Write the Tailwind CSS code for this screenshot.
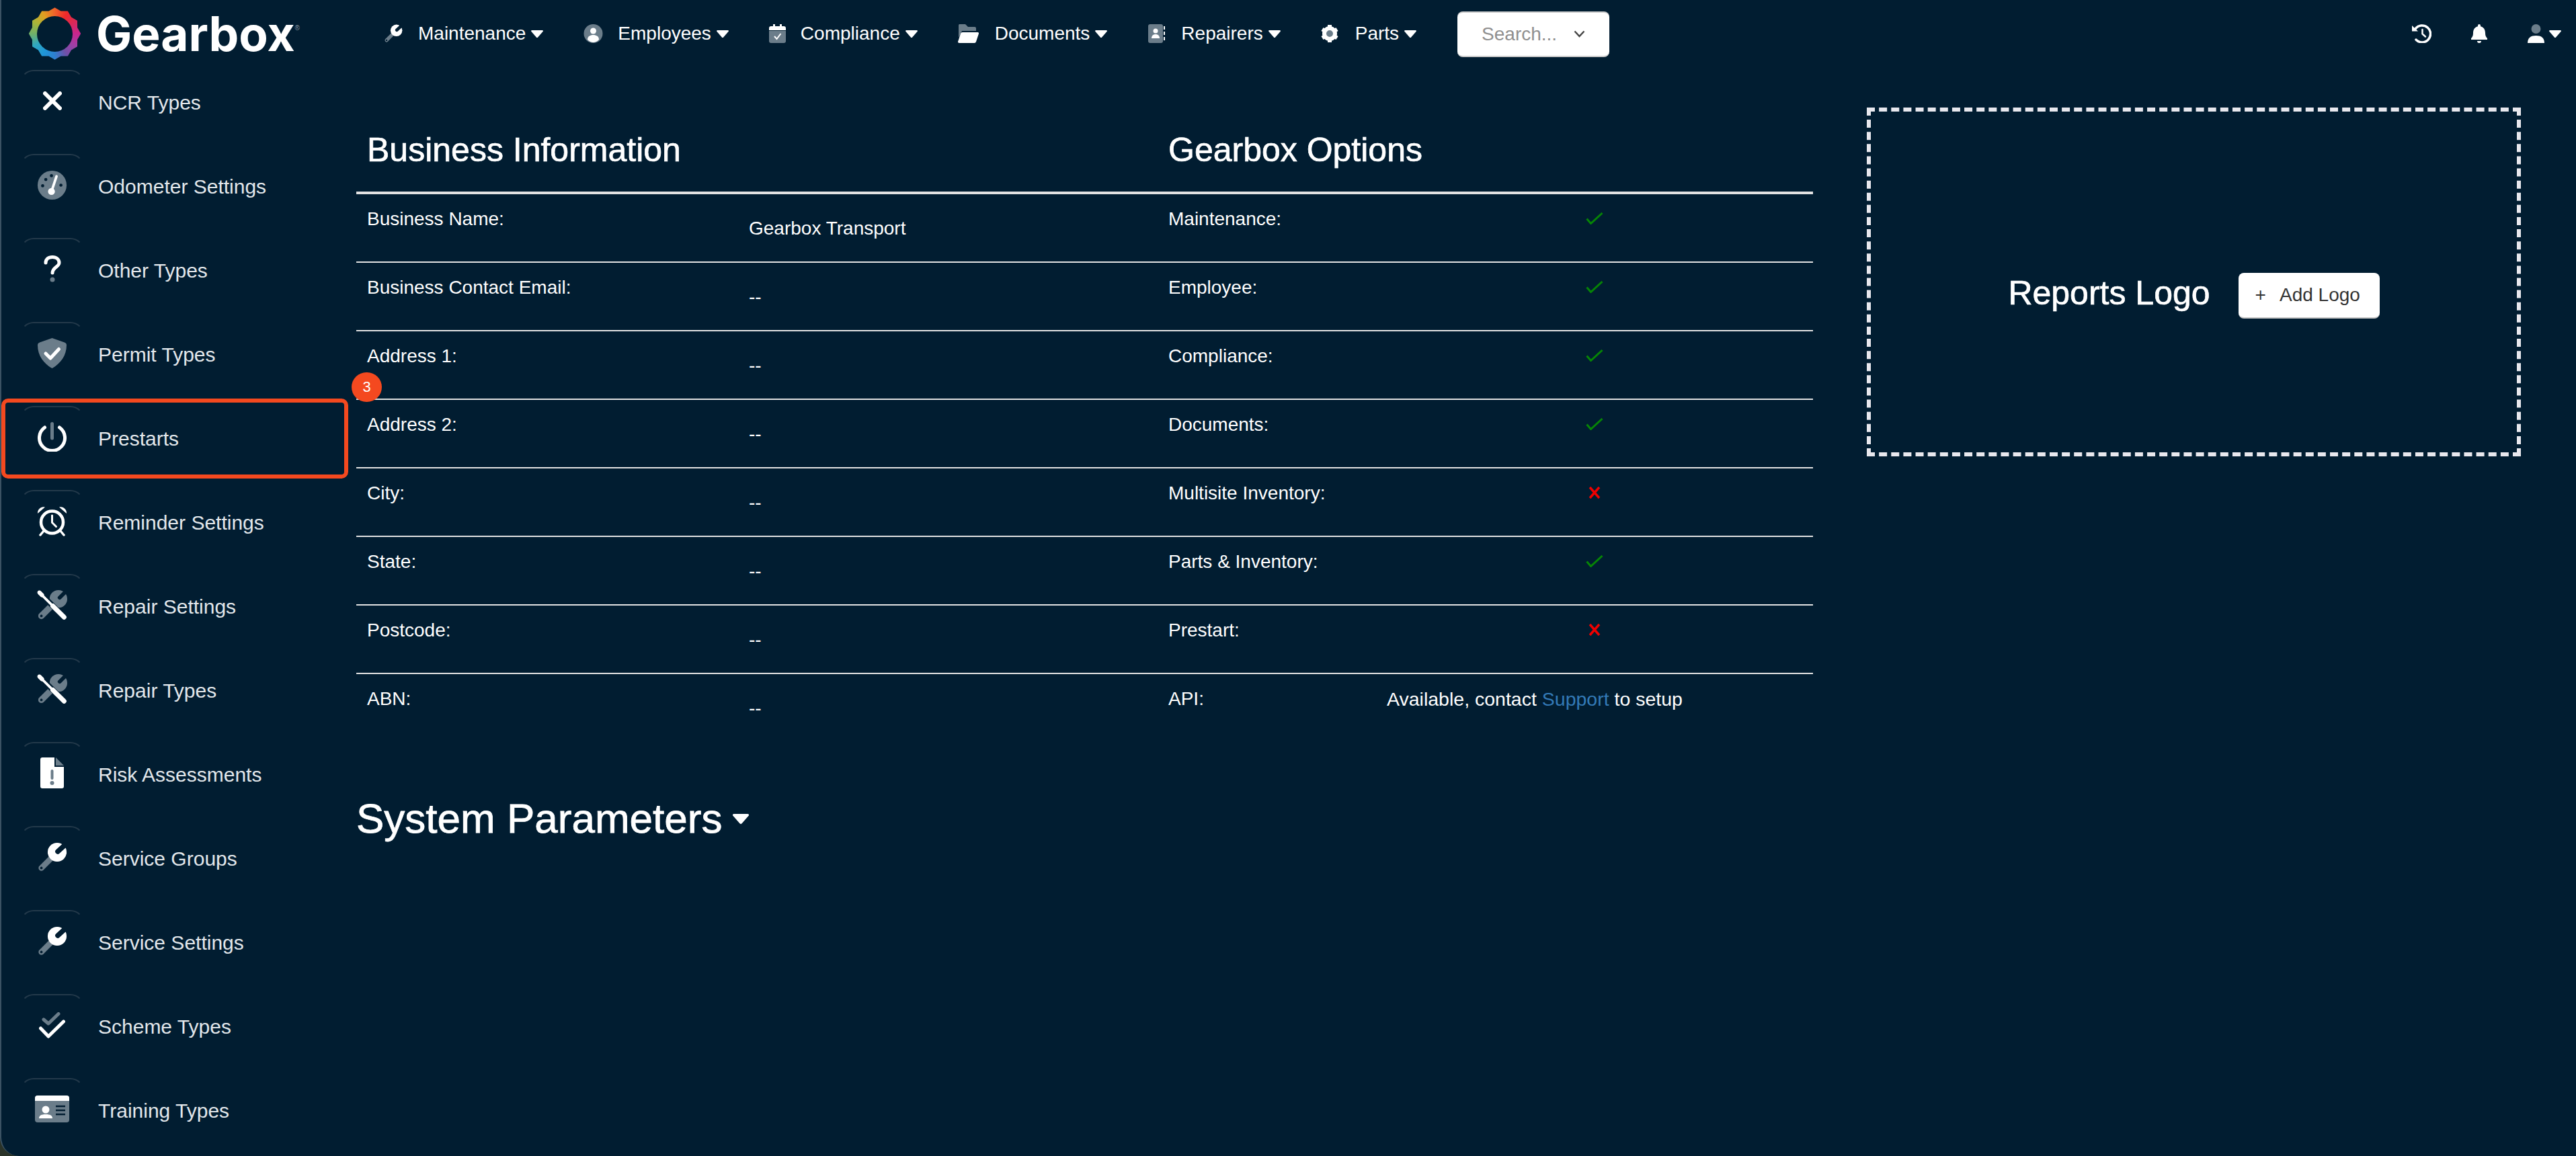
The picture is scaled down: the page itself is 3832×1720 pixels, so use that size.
<!DOCTYPE html>
<html lang="en">
<head>
  <meta charset="UTF-8">
  <title>Gearbox - Business Settings</title>
  <script src="https://cdn.jsdelivr.net/npm/@tailwindcss/browser@4"></script>
</head>
<body class="bg-[#2a3328] font-['Liberation_Sans',Arial,sans-serif]">
  <!-- shared icons -->
  <svg class="hidden">
    <symbol id="caret" viewBox="0 0 18 11"><path d="M1.5 0h15c1.300 0 1.800 1.200 1 2.100l-7.400 8.300c-.6.700-1.600.7-2.200 0L.5 2.100C-.3 1.200.2 0 1.500 0z" fill="#fff"/></symbol>
    <symbol id="check" viewBox="0 0 26 18"><path d="M1.500 9.500L7.500 16.500L24.500 1" fill="none" stroke="#068406" stroke-width="3"/></symbol>
    <symbol id="cross" viewBox="0 0 18 18"><path d="M2 1L16 17M16 1L2 17" fill="none" stroke="#f00000" stroke-width="3.500"/></symbol>
    <symbol id="wrench" viewBox="0 0 48 48">
      <path d="M7 41L24 24" stroke="#6b7d8a" stroke-width="9" stroke-linecap="round"/>
      <circle cx="7" cy="41" r="2" fill="#011d31"/>
      <circle cx="32" cy="16" r="15" fill="#fff"/>
      <path d="M33 15L46 3" stroke="#011d31" stroke-width="8" stroke-linecap="round"/>
    </symbol>
    <symbol id="tools" viewBox="0 0 48 48">
      <path d="M7 41L24 24" stroke="#6b7d8a" stroke-width="10" stroke-linecap="round"/>
      <circle cx="7" cy="41" r="2" fill="#011d31"/>
      <circle cx="34" cy="14" r="14" fill="#6b7d8a"/>
      <path d="M36 12L47 1" stroke="#011d31" stroke-width="6" stroke-linecap="round"/>
      <path d="M5 5L43 43" stroke="#011d31" stroke-width="9" stroke-linecap="round"/>
      <path d="M3 3L22 22" stroke="#fff" stroke-width="4" stroke-linecap="round"/>
      <path d="M4 4L8 8" stroke="#fff" stroke-width="6.500" stroke-linecap="round"/>
      <path d="M25 25L43 43" stroke="#fff" stroke-width="7.500" stroke-linecap="round"/>
    </symbol>
  </svg>

  <div class="w-[3832px] h-[1720px] overflow-hidden bg-[#011d31] border-l-2 border-[#3b5263] rounded-bl-[28px] text-white">
    <header class="h-[100px] mb-[4px] flex items-center">
      <div class="w-[568px] pl-[40px] flex items-center shrink-0">
        <div class="relative w-[79px] h-[79px] bg-[conic-gradient(#f0622a,#ee2a2a_30deg,#d8285a_60deg,#c9268f_90deg,#a03fa5_120deg,#6f50a8_150deg,#2d7fd0_180deg,#1f96d8_210deg,#2fa8c0_240deg,#6fb06a_270deg,#a8b53a_300deg,#e0a020_330deg,#f0622a)] [clip-path:polygon(50%_1%,61.4%_7.5%,74.5%_7.6%,81.1%_18.9%,92.4%_25.5%,92.500%_38.6%,99%_50%,92.500%_61.4%,92.4%_74.5%,81.1%_81.1%,74.5%_92.4%,61.4%_92.500%,50%_99%,38.6%_92.500%,25.5%_92.4%,18.9%_81.1%,7.6%_74.5%,7.500%_61.4%,1%_50%,7.500%_38.6%,7.6%_25.5%,18.9%_18.9%,25.5%_7.6%,38.6%_7.500%)]">
          <div class="absolute inset-[13px] rounded-full bg-[#011d31]"></div>
        </div>
        <span class="ml-[22px] font-['Inter',sans-serif] font-bold text-[71px] leading-[80px] tracking-[0px] text-white">Gearbox</span>
        <span class="self-start mt-[26px] text-[10px] leading-[12px] text-[#8a97a1]">®</span>
      </div>

      <nav class="flex items-center gap-[60px] text-[28px] leading-[36px] text-white">
        <a class="flex items-center">
          <svg class="w-[30px] h-[28px] mr-[22px]"><use href="#wrench"/></svg>
          <span>Maintenance</span>
          <svg class="w-[18px] h-[11px] ml-[8px]"><use href="#caret"/></svg>
        </a>
        <a class="flex items-center">
          <svg class="w-[29px] h-[28px] mr-[22px]" viewBox="0 0 29 28">
            <circle cx="14.500" cy="14" r="14" fill="#6b7d8a"/>
            <circle cx="14.500" cy="10" r="4.500" fill="#fff"/>
            <path d="M6 23c0-5 4-7 8.500-7s8.500 2 8.500 7c-2.500 2.500-5.500 4-8.500 4s-6-1.500-8.500-4z" fill="#fff"/>
          </svg>
          <span>Employees</span>
          <svg class="w-[18px] h-[11px] ml-[8px]"><use href="#caret"/></svg>
        </a>
        <a class="flex items-center">
          <svg class="w-[25px] h-[28px] mr-[22px]" viewBox="0 0 25 28">
            <path d="M0 10h25v15a3 3 0 0 1-3 3H3a3 3 0 0 1-3-3z" fill="#6b7d8a"/>
            <path d="M3 3h3V0h3v3h7V0h3v3h3a3 3 0 0 1 3 3v3H0V6a3 3 0 0 1 3-3z" fill="#fff"/>
            <path d="M8 18l3.500 4L17.500 14" fill="none" stroke="#fff" stroke-width="2"/>
          </svg>
          <span>Compliance</span>
          <svg class="w-[18px] h-[11px] ml-[8px]"><use href="#caret"/></svg>
        </a>
        <a class="flex items-center">
          <svg class="w-[31px] h-[28px] mr-[24px]" viewBox="0 0 31 28">
            <path d="M2 0h9l4 4h10a2 2 0 0 1 2 2v4H6L1 20V2a2 2 0 0 1 1-2z" fill="#6b7d8a"/>
            <path d="M7 12h22c1.500 0 2.300 1 2 2l-4 12c-.4 1.300-1.200 2-2.500 2H2c-1.500 0-2.300-1-2-2l4-12c.4-1.300 1.500-2 3-2z" fill="#fff"/>
          </svg>
          <span>Documents</span>
          <svg class="w-[18px] h-[11px] ml-[8px]"><use href="#caret"/></svg>
        </a>
        <a class="flex items-center">
          <svg class="w-[25px] h-[28px] mr-[24px] ml-[1px]" viewBox="0 0 25 28">
            <rect width="22" height="28" rx="3" fill="#6b7d8a"/>
            <circle cx="11" cy="10" r="3.500" fill="#fff"/>
            <path d="M5 21c0-4 2.500-6 6-6s6 2 6 6z" fill="#fff"/>
            <path d="M24 3v5M24 11v5M24 19v5" stroke="#fff" stroke-width="2"/>
          </svg>
          <span>Repairers</span>
          <svg class="w-[18px] h-[11px] ml-[8px]"><use href="#caret"/></svg>
        </a>
        <a class="flex items-center">
          <svg class="w-[26px] h-[28px] mr-[25px]" viewBox="0 0 26 28">
            <path d="M13 1v5M13 22v5M2 7.500l4 2.500M24 7.500l-4 2.500M2 20.500l4-2.500M24 20.500l-4-2.500" stroke="#fff" stroke-width="6"/>
            <circle cx="13" cy="14" r="8" fill="#6b7d8a" stroke="#fff" stroke-width="6"/>
          </svg>
          <span>Parts</span>
          <svg class="w-[18px] h-[11px] ml-[8px]"><use href="#caret"/></svg>
        </a>
        <div class="w-[226px] h-[68px] mt-[1px] ml-[1px] pl-[36px] pr-[36px] flex items-center justify-between bg-white rounded-[8px] border-y-2 border-[#cccccc] text-[#8f8f8f]">
          <span>Search...</span>
          <svg class="w-[17px] h-[11px]" viewBox="0 0 17 11"><path d="M1.500 1.500L8.500 9L15.500 1.500" fill="none" stroke="#444" stroke-width="2.500"/></svg>
        </div>
      </nav>

      <div class="ml-auto pr-[22px] flex items-center">
        <svg class="w-[29px] h-[28px]" viewBox="0 0 29 28">
          <path d="M5 7A12.500 12.500 0 1 1 6 23" fill="none" stroke="#fff" stroke-width="3.500" stroke-linecap="round"/>
          <path d="M0 2L9 10.500H0z" fill="#fff"/>
          <path d="M15.500 8v6.500l4.500 4" fill="none" stroke="#fff" stroke-width="2.500" stroke-linecap="round"/>
        </svg>
        <svg class="w-[24px] h-[28px] ml-[59px]" viewBox="0 0 24 28">
          <path d="M12 0a2 2 0 0 1 2 2v1.200C18.500 4 21 8 21 13c0 4 1 6 3 8v2H0v-2c2-2 3-4 3-8C3 8 5.500 4 10 3.200V2a2 2 0 0 1 2-2z" fill="#fff"/>
          <path d="M9 25h6a3 3 0 0 1-6 0z" fill="#fff"/>
        </svg>
        <svg class="w-[25px] h-[28px] ml-[60px]" viewBox="0 0 25 28">
          <circle cx="12.500" cy="7" r="7" fill="#6b7d8a"/>
          <path d="M0 28c0-8 5-11 12.500-11S25 20 25 28z" fill="#fff"/>
        </svg>
        <svg class="w-[18px] h-[11px] ml-[7px]"><use href="#caret"/></svg>
      </div>
    </header>

    <div class="flex">
      <aside class="w-[518px] shrink-0 text-[30px] leading-[36px] text-[#e2e7eb]">
        <div class="h-[125px] pl-[28px] flex items-start">
          <div class="w-[95px] h-[92px] flex items-center justify-center rounded-[20px] border-2 border-transparent border-t-[#23394a]">
            <svg class="w-[28px] h-[28px]" viewBox="0 0 28 28"><path d="M3 3L25 25M25 3L3 25" stroke="#fff" stroke-width="6" stroke-linecap="round"/></svg>
          </div>
          <span class="ml-[21px] h-[98px] flex items-center">NCR Types</span>
        </div>
        <div class="h-[125px] pl-[28px] flex items-start">
          <div class="w-[95px] h-[92px] flex items-center justify-center rounded-[20px] border-2 border-transparent border-t-[#23394a]">
            <svg class="w-[45px] h-[45px]" viewBox="0 0 48 48">
              <circle cx="24" cy="24" r="23" fill="#6b7d8a"/>
              <circle cx="14" cy="15" r="2.500" fill="#011d31"/><circle cx="23" cy="9" r="2.500" fill="#011d31"/><circle cx="9" cy="25" r="2.500" fill="#011d31"/><circle cx="38" cy="24" r="2.500" fill="#011d31"/>
              <path d="M31 10L24 31" stroke="#fff" stroke-width="4" stroke-linecap="round"/>
              <circle cx="23" cy="34" r="5.500" fill="#fff"/>
            </svg>
          </div>
          <span class="ml-[21px] h-[98px] flex items-center">Odometer Settings</span>
        </div>
        <div class="h-[125px] pl-[28px] flex items-start">
          <div class="w-[95px] h-[92px] flex items-center justify-center rounded-[20px] border-2 border-transparent border-t-[#23394a]">
            <svg class="w-[26px] h-[40px]" viewBox="0 0 26 40">
              <path d="M3 11C3 5.500 7 2.500 13 2.500S23 6 23 11C23 17 13 18 13 26" fill="none" stroke="#fff" stroke-width="5" stroke-linecap="round"/>
              <circle cx="13" cy="36" r="3.500" fill="#6b7d8a"/>
            </svg>
          </div>
          <span class="ml-[21px] h-[98px] flex items-center">Other Types</span>
        </div>
        <div class="h-[125px] pl-[28px] flex items-start">
          <div class="w-[95px] h-[92px] flex items-center justify-center rounded-[20px] border-2 border-transparent border-t-[#23394a]">
            <svg class="w-[43px] h-[45px]" viewBox="0 0 43 45">
              <path d="M21.500 0L40 6.500c2 .7 3 2 3 4C43 26 34 38 21.500 45C9 38 0 26 0 10.500c0-2 1-3.300 3-4z" fill="#6b7d8a"/>
              <path d="M12 23l7 7L31.500 16.500" fill="none" stroke="#fff" stroke-width="5" stroke-linecap="round" stroke-linejoin="round"/>
            </svg>
          </div>
          <span class="ml-[21px] h-[98px] flex items-center">Permit Types</span>
        </div>
        <div class="relative h-[125px] pl-[28px] flex items-start">
          <div class="absolute top-[-11px] left-0 w-[516px] h-[119px] rounded-[10px] border-[6px] border-[#f4491f]"></div>
          <div class="absolute top-[-50px] left-[521px] z-10 w-[45px] h-[44px] rounded-full bg-[#f4491f] flex items-center justify-center text-[22px] leading-[24px] text-white">3</div>
          <div class="w-[95px] h-[92px] flex items-center justify-center rounded-[20px] border-2 border-transparent border-t-[#23394a]">
            <svg class="w-[43px] h-[44px]" viewBox="0 0 43 44">
              <path d="M10.500 8A19 19 0 1 0 32.500 8" fill="none" stroke="#fff" stroke-width="5" stroke-linecap="round"/>
              <path d="M21.500 2.500V24" stroke="#6b7d8a" stroke-width="5" stroke-linecap="round"/>
            </svg>
          </div>
          <span class="ml-[21px] h-[98px] flex items-center">Prestarts</span>
        </div>
        <div class="h-[125px] pl-[28px] flex items-start">
          <div class="w-[95px] h-[92px] flex items-center justify-center rounded-[20px] border-2 border-transparent border-t-[#23394a]">
            <svg class="w-[45px] h-[45px]" viewBox="0 0 45 45">
              <circle cx="22.500" cy="24" r="16.500" fill="none" stroke="#fff" stroke-width="4.500"/>
              <path d="M22.500 14v10.500l6 6" fill="none" stroke="#fff" stroke-width="3" stroke-linecap="round"/>
              <path d="M1 11A9 9 0 0 1 12 1.500z" fill="#fff"/>
              <path d="M44 11A9 9 0 0 0 33 1.500z" fill="#fff"/>
              <path d="M10 37l-5 6M35 37l5 6" stroke="#fff" stroke-width="3.500" stroke-linecap="round"/>
            </svg>
          </div>
          <span class="ml-[21px] h-[98px] flex items-center">Reminder Settings</span>
        </div>
        <div class="h-[125px] pl-[28px] flex items-start">
          <div class="w-[95px] h-[92px] flex items-center justify-center rounded-[20px] border-2 border-transparent border-t-[#23394a]">
            <svg class="w-[45px] h-[45px]"><use href="#tools"/></svg>
          </div>
          <span class="ml-[21px] h-[98px] flex items-center">Repair Settings</span>
        </div>
        <div class="h-[125px] pl-[28px] flex items-start">
          <div class="w-[95px] h-[92px] flex items-center justify-center rounded-[20px] border-2 border-transparent border-t-[#23394a]">
            <svg class="w-[45px] h-[45px]"><use href="#tools"/></svg>
          </div>
          <span class="ml-[21px] h-[98px] flex items-center">Repair Types</span>
        </div>
        <div class="h-[125px] pl-[28px] flex items-start">
          <div class="w-[95px] h-[92px] flex items-center justify-center rounded-[20px] border-2 border-transparent border-t-[#23394a]">
            <svg class="w-[35px] h-[46px]" viewBox="0 0 35 46">
              <path d="M3 0h18v14h14v29a3 3 0 0 1-3 3H3a3 3 0 0 1-3-3V3a3 3 0 0 1 3-3z" fill="#fff"/>
              <path d="M23 0l12 12H23z" fill="#6b7d8a"/>
              <rect x="15.500" y="18" width="4" height="15" rx="2" fill="#6b7d8a"/>
              <circle cx="17.500" cy="38" r="3" fill="#6b7d8a"/>
            </svg>
          </div>
          <span class="ml-[21px] h-[98px] flex items-center">Risk Assessments</span>
        </div>
        <div class="h-[125px] pl-[28px] flex items-start">
          <div class="w-[95px] h-[92px] flex items-center justify-center rounded-[20px] border-2 border-transparent border-t-[#23394a]">
            <svg class="w-[45px] h-[45px]"><use href="#wrench"/></svg>
          </div>
          <span class="ml-[21px] h-[98px] flex items-center">Service Groups</span>
        </div>
        <div class="h-[125px] pl-[28px] flex items-start">
          <div class="w-[95px] h-[92px] flex items-center justify-center rounded-[20px] border-2 border-transparent border-t-[#23394a]">
            <svg class="w-[45px] h-[45px]"><use href="#wrench"/></svg>
          </div>
          <span class="ml-[21px] h-[98px] flex items-center">Service Settings</span>
        </div>
        <div class="h-[125px] pl-[28px] flex items-start">
          <div class="w-[95px] h-[92px] flex items-center justify-center rounded-[20px] border-2 border-transparent border-t-[#23394a]">
            <svg class="w-[39px] h-[39px]" viewBox="0 0 39 39">
              <path d="M7 11l7 6L29 2.500" fill="none" stroke="#6b7d8a" stroke-width="5" stroke-linecap="round" stroke-linejoin="round"/>
              <path d="M2.500 24L14 36L36.500 14" fill="none" stroke="#fff" stroke-width="5" stroke-linecap="round" stroke-linejoin="round"/>
            </svg>
          </div>
          <span class="ml-[21px] h-[98px] flex items-center">Scheme Types</span>
        </div>
        <div class="h-[125px] pl-[28px] flex items-start">
          <div class="w-[95px] h-[92px] flex items-center justify-center rounded-[20px] border-2 border-transparent border-t-[#23394a]">
            <svg class="w-[51px] h-[40px]" viewBox="0 0 51 40">
              <rect width="51" height="40" rx="4" fill="#6b7d8a"/>
              <path d="M4 0h43a4 4 0 0 1 4 4v4H0V4a4 4 0 0 1 4-4z" fill="#fff"/>
              <circle cx="16" cy="21" r="5.500" fill="#fff"/>
              <path d="M6 34c0-4 3-6 10-6s10 2 10 6z" fill="#fff"/>
              <path d="M31 16h14M31 22h14M31 28h14" stroke="#011d31" stroke-width="2.500"/>
            </svg>
          </div>
          <span class="ml-[21px] h-[98px] flex items-center">Training Types</span>
        </div>
      </aside>

      <main class="pl-[10px] flex items-start">
        <div class="w-[2167px] shrink-0">
          <div class="grid grid-cols-[1192px_975px] text-[28px] leading-[36px] text-white">
            <section>
              <h2 class="h-[185px] pt-[90px] pl-[16px] border-b-4 border-[#e2e2e2] text-[50px] leading-[58px] [-webkit-text-stroke:0.7px_white]">Business Information</h2>
              <div class="h-[102px] flex border-b-2 border-[#e2e2e2]"><span class="w-[584px] pl-[16px] pt-[19px]">Business Name:</span><span class="pt-[33px]">Gearbox Transport</span></div>
              <div class="h-[102px] flex border-b-2 border-[#e2e2e2]"><span class="w-[584px] pl-[16px] pt-[19px]">Business Contact Email:</span><span class="pt-[33px]">--</span></div>
              <div class="h-[102px] flex border-b-2 border-[#e2e2e2]"><span class="w-[584px] pl-[16px] pt-[19px]">Address 1:</span><span class="pt-[33px]">--</span></div>
              <div class="h-[102px] flex border-b-2 border-[#e2e2e2]"><span class="w-[584px] pl-[16px] pt-[19px]">Address 2:</span><span class="pt-[33px]">--</span></div>
              <div class="h-[102px] flex border-b-2 border-[#e2e2e2]"><span class="w-[584px] pl-[16px] pt-[19px]">City:</span><span class="pt-[33px]">--</span></div>
              <div class="h-[102px] flex border-b-2 border-[#e2e2e2]"><span class="w-[584px] pl-[16px] pt-[19px]">State:</span><span class="pt-[33px]">--</span></div>
              <div class="h-[102px] flex border-b-2 border-[#e2e2e2]"><span class="w-[584px] pl-[16px] pt-[19px]">Postcode:</span><span class="pt-[33px]">--</span></div>
              <div class="h-[102px] flex"><span class="w-[584px] pl-[16px] pt-[19px]">ABN:</span><span class="pt-[33px]">--</span></div>
            </section>
            <section>
              <h2 class="h-[185px] pt-[90px] pl-[16px] border-b-4 border-[#e2e2e2] text-[50px] leading-[58px] [-webkit-text-stroke:0.7px_white]">Gearbox Options</h2>
              <div class="h-[102px] flex items-start border-b-2 border-[#e2e2e2]"><span class="w-[637px] pl-[16px] pt-[19px]">Maintenance:</span><svg class="w-[26px] h-[18px] mt-[27px]"><use href="#check"/></svg></div>
              <div class="h-[102px] flex items-start border-b-2 border-[#e2e2e2]"><span class="w-[637px] pl-[16px] pt-[19px]">Employee:</span><svg class="w-[26px] h-[18px] mt-[27px]"><use href="#check"/></svg></div>
              <div class="h-[102px] flex items-start border-b-2 border-[#e2e2e2]"><span class="w-[637px] pl-[16px] pt-[19px]">Compliance:</span><svg class="w-[26px] h-[18px] mt-[27px]"><use href="#check"/></svg></div>
              <div class="h-[102px] flex items-start border-b-2 border-[#e2e2e2]"><span class="w-[637px] pl-[16px] pt-[19px]">Documents:</span><svg class="w-[26px] h-[18px] mt-[27px]"><use href="#check"/></svg></div>
              <div class="h-[102px] flex items-start border-b-2 border-[#e2e2e2]"><span class="w-[641px] pl-[16px] pt-[19px]">Multisite Inventory:</span><svg class="w-[18px] h-[18px] mt-[27px]"><use href="#cross"/></svg></div>
              <div class="h-[102px] flex items-start border-b-2 border-[#e2e2e2]"><span class="w-[637px] pl-[16px] pt-[19px]">Parts &amp; Inventory:</span><svg class="w-[26px] h-[18px] mt-[27px]"><use href="#check"/></svg></div>
              <div class="h-[102px] flex items-start border-b-2 border-[#e2e2e2]"><span class="w-[641px] pl-[16px] pt-[19px]">Prestart:</span><svg class="w-[18px] h-[18px] mt-[27px]"><use href="#cross"/></svg></div>
              <div class="h-[102px] flex items-start"><span class="w-[341px] pl-[16px] pt-[19px]">API:</span><span class="pt-[19px] text-[28.5px]">Available, contact <a class="text-[#337ab7]">Support</a> to setup</span></div>
            </section>
          </div>
          <div class="mt-[77px] flex items-center gap-[15px] text-[62px] leading-[72px] text-white">
            <h2 class="[-webkit-text-stroke:0.8px_white]">System Parameters</h2>
            <svg class="w-[26px] h-[15px]"><use href="#caret"/></svg>
          </div>
        </div>

        <div class="ml-[80px] mt-[56px] w-[973px] h-[519px] pt-[40px] flex items-center justify-center gap-[42px] border-[6px] border-dashed border-[#e8e8ee]">
          <span class="mb-[8px] text-[50px] leading-[58px] text-white [-webkit-text-stroke:0.7px_white]">Reports Logo</span>
          <button class="w-[210px] h-[68px] pl-[25px] flex items-center gap-[20px] bg-white rounded-[8px] border-b-2 border-[#c9c9c9] text-[28px] leading-[36px] text-[#333333]"><span>+</span><span>Add Logo</span></button>
        </div>
      </main>
    </div>
  </div>
</body>
</html>
